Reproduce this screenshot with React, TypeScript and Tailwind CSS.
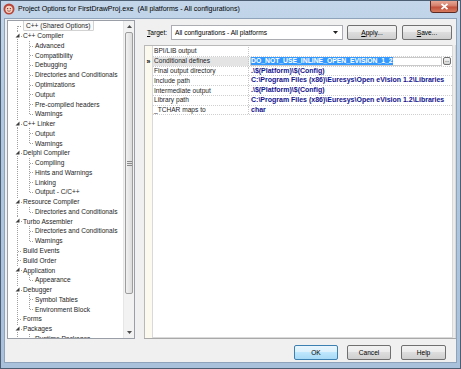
// Project Options dialog (C++Builder, Win7 Aero)

const FONT = { fontFamily: '"Liberation Sans", Arial, sans-serif' };
const ROW_H = 9.77;

type TreeNode = {
  text: string;
  level: 0 | 1;
  kind?: 'leaf' | 'exp';
  last?: boolean;
  first?: boolean;
  selected?: boolean;
};

const tree: TreeNode[] = [
  { text: 'C++ (Shared Options)', level: 0, kind: 'leaf', first: true, selected: true },
  { text: 'C++ Compiler', level: 0, kind: 'exp' },
  { text: 'Advanced', level: 1 },
  { text: 'Compatibility', level: 1 },
  { text: 'Debugging', level: 1 },
  { text: 'Directories and Conditionals', level: 1 },
  { text: 'Optimizations', level: 1 },
  { text: 'Output', level: 1 },
  { text: 'Pre-compiled headers', level: 1 },
  { text: 'Warnings', level: 1, last: true },
  { text: 'C++ Linker', level: 0, kind: 'exp' },
  { text: 'Output', level: 1 },
  { text: 'Warnings', level: 1, last: true },
  { text: 'Delphi Compiler', level: 0, kind: 'exp' },
  { text: 'Compiling', level: 1 },
  { text: 'Hints and Warnings', level: 1 },
  { text: 'Linking', level: 1 },
  { text: 'Output - C/C++', level: 1, last: true },
  { text: 'Resource Compiler', level: 0, kind: 'exp' },
  { text: 'Directories and Conditionals', level: 1, last: true },
  { text: 'Turbo Assembler', level: 0, kind: 'exp' },
  { text: 'Directories and Conditionals', level: 1 },
  { text: 'Warnings', level: 1, last: true },
  { text: 'Build Events', level: 0, kind: 'leaf' },
  { text: 'Build Order', level: 0, kind: 'leaf' },
  { text: 'Application', level: 0, kind: 'exp' },
  { text: 'Appearance', level: 1, last: true },
  { text: 'Debugger', level: 0, kind: 'exp' },
  { text: 'Symbol Tables', level: 1 },
  { text: 'Environment Block', level: 1, last: true },
  { text: 'Forms', level: 0, kind: 'leaf' },
  { text: 'Packages', level: 0, kind: 'exp' },
  { text: 'Runtime Packages', level: 1 },
];

const props: { name: string; value: string; selected?: boolean }[] = [
  { name: 'BPI/LIB output', value: '' },
  { name: 'Conditional defines', value: 'DO_NOT_USE_INLINE_OPEN_EVISION_1_2', selected: true },
  { name: 'Final output directory', value: '.\\$(Platform)\\$(Config)' },
  { name: 'Include path', value: 'C:\\Program Files (x86)\\Euresys\\Open eVision 1.2\\Libraries' },
  { name: 'Intermediate output', value: '.\\$(Platform)\\$(Config)' },
  { name: 'Library path', value: 'C:\\Program Files (x86)\\Euresys\\Open eVision 1.2\\Libraries' },
  { name: '_TCHAR maps to', value: 'char' },
];

function Connector({ node }: { node: TreeNode }) {
  const m = ROW_H / 2;
  const dot = { stroke: '#a0a0a0', strokeWidth: 1, strokeDasharray: '1 1', shapeRendering: 'crispEdges' as const };
  const w = node.level === 0 ? 14 : 26;
  return (
    <svg width={w} height={ROW_H} className="shrink-0">
      <line x1={9.5} x2={9.5} y1={node.first ? m : 0} y2={ROW_H} {...dot} />
      {node.level === 0 && node.kind === 'leaf' && <line x1={10} x2={14} y1={m + 0.5} y2={m + 0.5} {...dot} />}
      {node.level === 0 && node.kind === 'exp' && (
        <>
          <rect x={6} y={m - 3} width={7} height={6} fill="#fff" />
          <polygon points={`11.5,${m - 2.5} 11.5,${m + 1.5} 7.5,${m + 1.5}`} fill="#3c3c3c" />
          <line x1={13} x2={14} y1={m + 0.5} y2={m + 0.5} {...dot} />
        </>
      )}
      {node.level === 1 && (
        <>
          <line x1={21.5} x2={21.5} y1={0} y2={node.last ? m : ROW_H} {...dot} />
          <line x1={22} x2={26} y1={m + 0.5} y2={m + 0.5} {...dot} />
        </>
      )}
    </svg>
  );
}

function TreeRow({ node }: { node: TreeNode }) {
  return (
    <div className="flex items-center h-[9.77px] shrink-0">
      <Connector node={node} />
      <span
        className={
          'ml-[1px] text-[6.6px] leading-[9px] text-[#1e1e1e] whitespace-nowrap ' +
          (node.selected ? 'border border-[#d2d2d2] bg-[#fafafa] px-[2px] -ml-[1px] rounded-[1px]' : '')
        }
      >
        {node.text}
      </span>
    </div>
  );
}

function WinButton({ label, u, w, isDefault }: { label: string; u?: number; w: string; isDefault?: boolean }) {
  const text = u === undefined ? label : (
    <>
      {label.slice(0, u)}
      <span className="underline">{label[u]}</span>
      {label.slice(u + 1)}
    </>
  );
  return (
    <div
      className={
        w +
        ' h-[15px] shrink-0 rounded-[2px] border flex items-center justify-center text-[6.6px] text-black ' +
        (isDefault
          ? 'border-[#3c7fb1] bg-[linear-gradient(#eaf6fd_0%,#d9f0fc_50%,#bee6fd_50%,#a7d9f5_100%)]'
          : 'border-[#707070] bg-[linear-gradient(#f2f2f2_0%,#ebebeb_50%,#dddddd_50%,#cfcfcf_100%)]')
      }
    >
      {text}
    </div>
  );
}

export default function App() {
  return (
    <div
      style={FONT}
      className="w-[461px] h-[369px] flex flex-col overflow-hidden border border-[#4d5e72] bg-[linear-gradient(180deg,#c3d6ea_0%,#b1c8e0_30%,#a9c1db_100%)]"
    >
      {/* title bar */}
      <div className="h-[17px] flex items-start shrink-0">
        <svg width="12" height="12" viewBox="0 0 12 12" className="ml-[2px] mt-[2px]">
          <circle cx="6" cy="6" r="5.5" fill="#b8473a" />
          <circle cx="6" cy="6.3" r="3.6" fill="#f3d2c2" />
          <circle cx="4.6" cy="5.6" r="0.7" fill="#7a2a20" />
          <circle cx="7.4" cy="5.6" r="0.7" fill="#7a2a20" />
          <path d="M4.3 7.6 Q6 9 7.7 7.6" stroke="#7a2a20" strokeWidth="0.7" fill="none" />
        </svg>
        <span className="ml-[3px] mt-[3px] text-[7px] leading-[10px] text-black whitespace-nowrap">
          Project Options for FirstDrawProj.exe&nbsp; (All platforms - All configurations)
        </span>
        <div className="flex-1" />
        <div className="mr-[2px] w-[28px] h-[13px] -mt-[1px] rounded-b-[3px] border border-[#5b2b24] bg-[linear-gradient(#e8a796_0%,#d47d6a_45%,#c2503c_55%,#d67a5d_100%)] flex items-center justify-center">
          <svg width="9" height="7" viewBox="0 0 9 7">
            <path d="M1.5 0.8 L7.5 6.2 M7.5 0.8 L1.5 6.2" stroke="#fff" strokeWidth="1.8" />
          </svg>
        </div>
      </div>

      {/* client area */}
      <div className="mx-[3px] mb-[5px] flex-1 flex flex-col bg-[#f0f0f0] border border-[#8fa4bb]">
        <div className="flex pt-[1px]">
          {/* tree */}
          <div className="ml-[2px] w-[128px] h-[319px] border border-[#9a9ea6] bg-white flex overflow-hidden">
            <div className="flex-1 flex flex-col overflow-hidden">
              {tree.map((n, i) => (
                <TreeRow key={i} node={n} />
              ))}
            </div>
            {/* scrollbar */}
            <div className="w-[11px] flex flex-col bg-[#f2f2f2] border-l border-[#e6e6e6]">
              <div className="h-[11px] flex items-center justify-center">
                <svg width="5" height="3"><polygon points="2.5,0 5,3 0,3" fill="#4d4d4d" /></svg>
              </div>
              <div className="h-[262px] mx-[1px] rounded-[2px] border border-[#9d9d9d] bg-[linear-gradient(90deg,#f1f1f1,#dcdcdc)] flex items-center justify-center">
                <div className="w-[5px] h-[5px] flex flex-col justify-between">
                  <div className="h-px bg-[#8a8a8a]" />
                  <div className="h-px bg-[#8a8a8a]" />
                  <div className="h-px bg-[#8a8a8a]" />
                </div>
              </div>
              <div className="flex-1" />
              <div className="h-[11px] flex items-center justify-center">
                <svg width="5" height="3"><polygon points="0,0 5,0 2.5,3" fill="#4d4d4d" /></svg>
              </div>
            </div>
          </div>

          {/* right panel */}
          <div className="ml-[5px] flex-1 flex flex-col">
            <div className="mt-[5px] h-[15px] flex items-center">
              <span className="ml-[7px] w-[24px] text-[6.6px] text-black">
                <span className="underline">T</span>arget:
              </span>
              <div className="w-[172px] h-[15px] border border-[#abadb3] bg-white flex items-center">
                <span className="ml-[3px] text-[6.6px] text-black whitespace-nowrap">
                  All configurations - All platforms
                </span>
                <div className="flex-1" />
                <svg width="5" height="3" className="mr-[4px]"><polygon points="0,0 5,0 2.5,3" fill="#222" /></svg>
              </div>
              <div className="ml-[4px]">
                <WinButton label="Apply..." u={0} w="w-[50px]" />
              </div>
              <div className="ml-[5px]">
                <WinButton label="Save..." u={0} w="w-[50px]" />
              </div>
            </div>

            {/* property grid */}
            <div className="mt-[5px] ml-[4px] h-[294px] flex border-b border-[#a9a9a9]">
              <div className="flex-1 flex border-l border-t border-[#b9b9b9] bg-white">
                <div className="w-[8px] bg-[#fcf9ee] border-r border-[#d9d9d9] flex flex-col pt-[1px]">
                  {props.map((p, i) => (
                    <div key={i} className="h-[9.77px] flex items-center justify-center">
                      {p.selected && <span className="text-[7px] leading-none text-black font-bold">»</span>}
                    </div>
                  ))}
                </div>
                <div className="flex-1 flex flex-col pt-[1px] border-b border-[#dadada]">
                  {props.map((p, i) => (
                    <div key={i} className="h-[9.77px] flex border-b border-dotted border-[#cfcfcf]">
                      <div
                        className={
                          'w-[96px] shrink-0 flex items-center pl-[1px] border-r border-dotted border-[#c6c6c6] ' +
                          (p.selected ? 'bg-[#e4e4e4]' : '')
                        }
                      >
                        <span className="text-[6.6px] text-[#1e1e1e] whitespace-nowrap">{p.name}</span>
                      </div>
                      {p.selected ? (
                        <div className="flex-1 flex items-center pl-[1px] overflow-hidden">
                          <div className="flex-1 h-[9px] flex items-center border border-[#c9c9c9] bg-white">
                            <span className="bg-[#3399ff] text-white font-bold text-[6.8px] leading-[8px] whitespace-nowrap">
                              {p.value}
                            </span>
                          </div>
                          <div className="ml-[1px] mr-[1px] w-[8px] h-[8px] rounded-[2px] border border-[#707070] bg-[linear-gradient(#f4f4f4,#d6d6d6)] flex items-center justify-center">
                            <span className="text-[5px] leading-none text-black -mt-[2px]">...</span>
                          </div>
                        </div>
                      ) : (
                        <div className="flex-1 flex items-center pl-[2px] overflow-hidden">
                          <span className="text-[7px] font-bold text-[#14148c] whitespace-nowrap">{p.value}</span>
                        </div>
                      )}
                    </div>
                  ))}
                </div>
              </div>
              <div className="w-[4px] border-l border-[#d8d8d8] border-r border-[#8f8f8f] bg-[#ececec]" />
            </div>
          </div>
        </div>

        {/* bottom buttons */}
        <div className="flex-1 flex items-start justify-end pt-[6px] pr-[10px]">
          <WinButton label="OK" w="w-[44px]" isDefault />
          <div className="ml-[9px]">
            <WinButton label="Cancel" w="w-[44px]" />
          </div>
          <div className="ml-[10px]">
            <WinButton label="Help" w="w-[45px]" />
          </div>
        </div>
      </div>
    </div>
  );
}
